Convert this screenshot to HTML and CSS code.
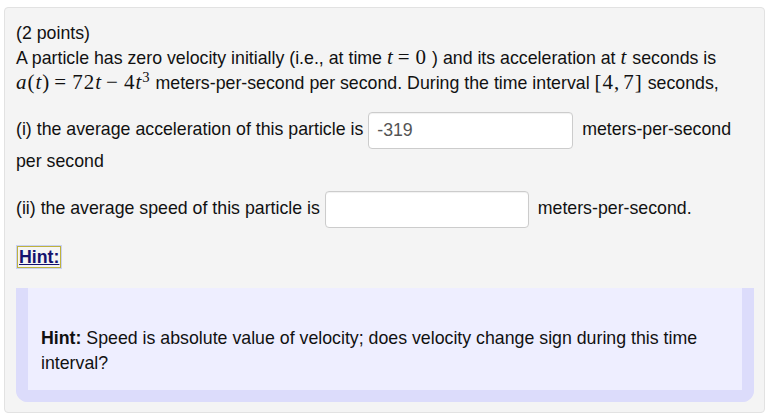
FILE: index.html
```html
<!DOCTYPE html>
<html>
<head>
<meta charset="utf-8">
<link rel="stylesheet" href="styles.css">
</head>
<body>
<div class="panel">
  <div class="intro">(2 points)<br>A particle has zero velocity initially (i.e., at time <span class="m"><i>t</i><span class="op">=</span>0</span> ) and its acceleration at <span class="m"><i>t</i></span> seconds is<br><span class="m"><i>a</i>(<i>t</i>)<span class="op">=</span>72<i>t</i><span class="op2">−</span>4<i>t</i><sup>3</sup></span> meters-per-second per second. During the time interval <span class="m">[4,<span class="thin"></span>7]</span> seconds,</div>
  <p class="q q1">(i) the average acceleration of this particle is <input class="ans a1" type="text" value="-319"> meters-per-second per second</p>
  <p class="q q2">(ii) the average speed of this particle is <input class="ans a2" type="text" value=""> meters-per-second.</p>
  <p class="hintrow"><a class="hintlink" href="#">Hint:</a></p>
  <div class="hintbox">
    <p><b>Hint:</b> Speed is absolute value of velocity; does velocity change sign during this time interval?</p>
  </div>
</div>
</body>
</html>
```
FILE: styles.css
```css
html, body {
  margin: 0;
  padding: 0;
  background: #ffffff;
}
.panel {
  margin: 7px 0 0 4px;
  width: 761px;
  box-sizing: border-box;
  border: 1px solid #e2e2e2;
  border-radius: 4px;
  background: #f4f4f4;
  padding: 13px 10px 10px 11px;
  font-family: "Liberation Sans", Arial, sans-serif;
  font-size: 17.75px;
  line-height: 25px;
  color: #111111;
}
.intro {
  margin: 0;
}
.m {
  font-family: "Liberation Serif", "Times New Roman", serif;
  font-size: 21px;
  line-height: 1;
  letter-spacing: 1px;
}
.m i {
  font-style: italic;
}
.op {
  margin: 0 5px 0 4px;
}
.op2 {
  margin: 0 5px 0 4px;
}
.thin {
  display: inline-block;
  width: 3px;
}
sup {
  font-size: 0.7em;
  line-height: 0;
  vertical-align: 0.5em;
}
.q {
  margin: 16px 0 0 0;
}
.q2 {
  margin-top: 17px;
}
.ans {
  box-sizing: border-box;
  height: 37px;
  width: 205px;
  vertical-align: middle;
  border: 1px solid #cccccc;
  border-radius: 4px;
  background: #ffffff;
  box-shadow: inset 0 1px 1px rgba(0, 0, 0, 0.06);
  padding: 0 8px;
  font-family: "Liberation Sans", Arial, sans-serif;
  font-size: 17.75px;
  color: #555555;
  margin: 0 4px 0 0;
}
.a2 {
  width: 204px;
}
.hintrow {
  margin: 17px 0 0 0;
}
.hintlink {
  font-weight: bold;
  color: #14126e;
  text-decoration: underline;
  border: 1px solid #beb13c;
  box-shadow: 0 0 0 1px #c8d0f4;
  padding: 0 1px;
  margin-left: 1px;
}
.hintbox {
  margin-top: 18px;
  border: 12px solid #dcdcfb;
  border-top: none;
  border-radius: 0 0 12px 12px;
  background: #eeeeff;
  padding: 38px 13px 14px 13px;
}
.hintbox p {
  margin: 0;
}
```
